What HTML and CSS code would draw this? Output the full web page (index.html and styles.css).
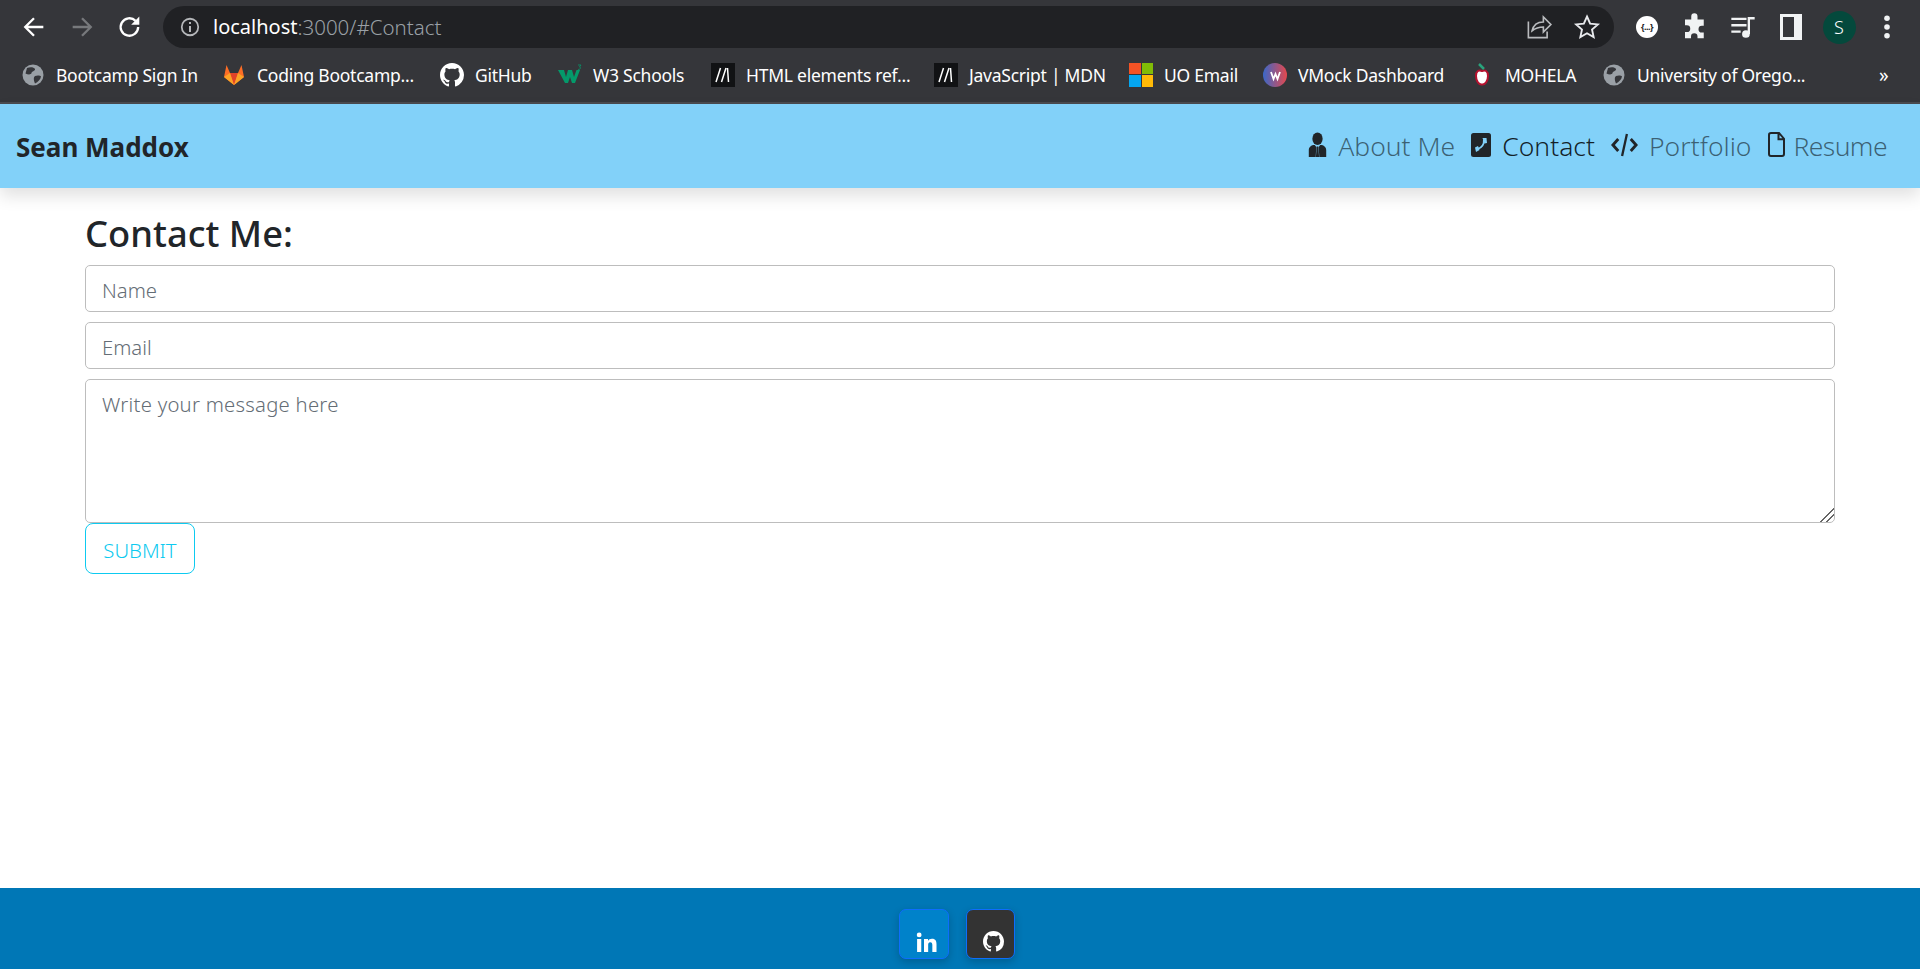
FILE: index.html
```html
<!DOCTYPE html>
<html lang="en">
<head>
<meta charset="utf-8">
<title>Sean Maddox</title>
<link rel="stylesheet" href="styles.css">
</head>
<body>
<div class="browser">
  <div class="toolbar">
    <svg class="tb-icon" viewBox="0 0 24 24"><path d="M20 12H5M12 4.500 4.500 12l7.500 7.500" fill="none" stroke="#fff" stroke-width="2"/></svg>
    <svg class="tb-icon" viewBox="0 0 24 24"><path d="M4 12h15M12 4.500 19.500 12 12 19.500" fill="none" stroke="#77797c" stroke-width="2"/></svg>
    <svg class="tb-icon" viewBox="0 0 24 24"><path d="M19 12a7.500 7.500 0 1 1-2.200-5.300" fill="none" stroke="#fff" stroke-width="2"/><path d="M20 3v7h-7z" fill="#fff"/></svg>
    <div class="omnibox">
      <svg class="info" viewBox="0 0 20 20"><circle cx="10" cy="10" r="7.500" fill="none" stroke="#b5b7ba" stroke-width="1.600"/><path d="M10 9v5.500M10 5.500v1.800" stroke="#b5b7ba" stroke-width="1.800"/></svg>
      <span class="host">localhost</span><span class="path">:3000/#Contact</span>
      <svg class="share" viewBox="0 0 24 24"><path d="M3.500 7.500v13h15v-5M6.500 15c1-4.500 4.500-7 9-7V4l6 6-6 6v-4c-3.500 0-6.500 1-9 3z" fill="none" stroke="#b9bbbe" stroke-width="1.300"/></svg>
      <svg class="star" viewBox="0 0 24 24"><path d="m12 3 2.700 6.100 6.600.7-5 4.400 1.400 6.500-5.700-3.300-5.700 3.300 1.400-6.500-5-4.400 6.600-.7z" fill="none" stroke="#e8eaed" stroke-width="1.600"/></svg>
    </div>
    <div class="ext">
      <span class="ext-json">{...}</span>
      <svg class="ext-puzzle" viewBox="0 0 24 24"><path d="M9 3.500a2.500 2.500 0 0 1 5 0V6h5v5h-1.500a2.700 2.700 0 0 0 0 5.400H19V21h-5v-1.500a2.600 2.600 0 0 0-5.200 0V21H4v-5h1.500a2.700 2.700 0 0 0 0-5.400H4V6h5z" fill="#f1f3f4"/></svg>
      <svg class="ext-queue" viewBox="0 0 24 24"><path d="M2 5h13M2 10.500h13M2 16h8M17 18V4.500h5" fill="none" stroke="#f1f3f4" stroke-width="2"/><circle cx="14.500" cy="18" r="3.300" fill="#f1f3f4"/></svg>
      <svg class="ext-panel" viewBox="0 0 22 26" preserveAspectRatio="none"><path d="M0 0h22v26H0z" fill="#f1f3f4"/><path d="M3 3h11v20H3z" fill="#35363a"/></svg>
      <span class="avatar">S</span>
      <svg class="ext-dots" viewBox="0 0 24 24"><circle cx="12" cy="4.500" r="2.400" fill="#f1f3f4"/><circle cx="12" cy="12" r="2.400" fill="#f1f3f4"/><circle cx="12" cy="19.500" r="2.400" fill="#f1f3f4"/></svg>
    </div>
  </div>
  <div class="bookmarks">
    <a class="bm w1"><svg class="fav" viewBox="0 0 24 24"><circle cx="12" cy="12" r="10.500" fill="#9aa0a6"/><path d="M6 5c3-1.500 7-1 8 1 .5 2-3 2-3.500 4-.5 2-4 1.500-6 .5zM14 13c2.500-1 5.500-.5 6 .5-.5 3-3 5.500-6 7-1-2.500-2-6 0-7.500z" fill="#35363a"/></svg>Bootcamp Sign In</a>
    <a class="bm w2"><svg class="fav" viewBox="0 0 24 24"><path d="M12 22 2 14l2.500-12L8 10h8l3.500-8L22 14z" fill="#fc6d26"/><path d="M12 22 8 10h8z" fill="#e24329"/><path d="M12 22 2 14l6-4zM12 22l10-8-6-4z" fill="#fca326"/></svg>Coding Bootcamp...</a>
    <a class="bm w3"><svg class="fav" viewBox="0 0 16 16"><path fill="#fff" fill-rule="evenodd" d="M8 0C3.580 0 0 3.580 0 8c0 3.540 2.290 6.530 5.470 7.590.4.070.55-.17.55-.38 0-.19-.01-.82-.01-1.490-2.010.37-2.530-.49-2.690-.94-.09-.23-.48-.94-.82-1.130-.28-.15-.68-.52-.01-.53.630-.01 1.080.58 1.230.82.720 1.210 1.870.87 2.330.66.070-.52.280-.87.510-1.070-1.780-.2-3.640-.89-3.640-3.950 0-.87.310-1.590.820-2.150-.08-.2-.36-1.020.08-2.120 0 0 .67-.21 2.200.82.640-.18 1.320-.27 2-.27s1.360.09 2 .27c1.530-1.040 2.200-.82 2.200-.82.440 1.100.16 1.920.08 2.120.51.560.82 1.270.82 2.150 0 3.070-1.870 3.750-3.650 3.950.29.250.54.730.54 1.480 0 1.070-.01 1.930-.01 2.200 0 .21.150.46.550.38A8.010 8.010 0 0 0 16 8c0-4.420-3.580-8-8-8z"/></svg>GitHub</a>
    <a class="bm w4"><svg class="fav" viewBox="0 0 24 24"><path d="M0 7h6l2 7 2-7h4l2 7 2.500-7H22l-5 13h-3l-2-6-2 6H7z" fill="#04996a"/><path d="M20 2h3l-1.500 2c1.500 0 1.500 2.500-1.500 2.500" fill="none" stroke="#04996a" stroke-width=".8"/></svg>W3 Schools</a>
    <a class="bm w5"><svg class="fav" viewBox="0 0 24 24"><path d="M0 0h24v24H0z" fill="#111214"/><path d="M5 19 9.500 5M10.500 19 15 5M16.500 5l1 14" fill="none" stroke="#fff" stroke-width="1.500"/></svg>HTML elements ref...</a>
    <a class="bm w6"><svg class="fav" viewBox="0 0 24 24"><path d="M0 0h24v24H0z" fill="#111214"/><path d="M5 19 9.500 5M10.500 19 15 5M16.500 5l1 14" fill="none" stroke="#fff" stroke-width="1.500"/></svg>JavaScript | MDN</a>
    <a class="bm w7"><span class="ms"><i class="ms-r"></i><i class="ms-g"></i><i class="ms-b"></i><i class="ms-y"></i></span>UO Email</a>
    <a class="bm w8"><svg class="fav" viewBox="0 0 24 24"><defs><linearGradient id="vm" x1="0" y1="0" x2="1" y2="0"><stop offset="0" stop-color="#3a68c8"/><stop offset="1" stop-color="#e5484d"/></linearGradient></defs><circle cx="12" cy="12" r="12" fill="url(#vm)"/><path d="m8 9 2.500 7 2-5 2 5 2.500-7" fill="none" stroke="#fff" stroke-width="1.800"/></svg>VMock Dashboard</a>
    <a class="bm w9"><svg class="fav" viewBox="0 0 24 24"><path d="M12 8c-3-1.500-6 0-6 5 0 5 3 9 6 8.500 3 .5 6-3.500 6-8.500 0-5-3-6.500-6-5z" fill="#fff" stroke="#b5122f" stroke-width="2"/><path d="M9 1l5 5" stroke="#2aa37c" stroke-width="2.500"/></svg>MOHELA</a>
    <a class="bm w10"><svg class="fav" viewBox="0 0 24 24"><circle cx="12" cy="12" r="10.500" fill="#9aa0a6"/><path d="M6 5c3-1.500 7-1 8 1 .5 2-3 2-3.500 4-.5 2-4 1.500-6 .5zM14 13c2.500-1 5.500-.5 6 .5-.5 3-3 5.500-6 7-1-2.500-2-6 0-7.500z" fill="#35363a"/></svg>University of Orego...</a>
    <span class="more">»</span>
  </div>
</div>
<nav class="navbar">
  <a class="brand">Sean Maddox</a>
  <ul class="nav">
    <li class="nav-item"><svg class="nav-ico person" viewBox="0 0 24 26" preserveAspectRatio="none"><circle cx="12" cy="7" r="6.500" fill="#212529"/><path d="M1 26v-7c0-3.500 3-5.500 7.500-5.500l2 2-.8 10.500zM23 26v-7c0-3.500-3-5.500-7.500-5.500l-2 2 .8 10.500zM11 15h2l1 11h-4z" fill="#212529"/></svg>About Me</li>
    <li class="nav-item active"><svg class="nav-ico phone" viewBox="0 0 20 24" preserveAspectRatio="none"><rect width="20" height="24" rx="2.500" fill="#212529"/><path d="M13 6.500c.3 4.500-2.200 8.500-6.500 9.500" fill="none" stroke="#82d1f9" stroke-width="2"/><path d="M11.500 5h4l.5 5-2.500.5zM4 14.500l3-1.500 1.500 4L5 19z" fill="#82d1f9"/></svg>Contact</li>
    <li class="nav-item"><svg class="nav-ico code" viewBox="0 0 28 24" preserveAspectRatio="none"><path d="M7.500 6 2 12l5.500 6M20.500 6 26 12l-5.500 6" fill="none" stroke="#212529" stroke-width="3"/><path d="M16.500 1 11.500 23" stroke="#212529" stroke-width="2.400"/></svg>Portfolio</li>
    <li class="nav-item resume"><svg class="nav-ico doc" viewBox="0 0 17 26" preserveAspectRatio="none"><path d="M1 3A2 2 0 0 1 3 1h8l5 6v16a2 2 0 0 1-2 2H3a2 2 0 0 1-2-2zM10.500 1v6.500H16" fill="none" stroke="#212529" stroke-width="2"/></svg>Resume</li>
  </ul>
</nav>
<main class="content">
  <h1 class="title">Contact Me:</h1>
  <form class="form">
    <input class="field" type="text" placeholder="Name">
    <input class="field" type="email" placeholder="Email">
    <textarea class="field area" placeholder="Write your message here"></textarea>
    <button class="submit" type="button">SUBMIT</button>
  </form>
</main>
<footer class="footer">
  <a class="social linkedin"><svg class="li-ico" viewBox="0 0 24 24"><circle cx="3.200" cy="3.500" r="2.900" fill="#fff"/><path d="M.7 8.500h5V24h-5zM9 8.500h4.800v2.200c.8-1.500 2.500-2.600 4.800-2.600 4.400 0 5.400 2.900 5.400 6.700V24h-5v-8c0-2-.3-3.700-2.500-3.700-2.300 0-2.500 1.800-2.500 3.700v8H9z" fill="#fff"/></svg></a>
  <a class="social github"><svg class="gh-ico" viewBox="0 0 16 16"><path fill="#fff" fill-rule="evenodd" d="M8 0C3.580 0 0 3.580 0 8c0 3.540 2.290 6.530 5.470 7.590.4.070.55-.17.55-.38 0-.19-.01-.82-.01-1.490-2.010.37-2.530-.49-2.690-.94-.09-.23-.48-.94-.82-1.130-.28-.15-.68-.52-.01-.53.630-.01 1.080.58 1.230.82.720 1.210 1.870.87 2.330.66.070-.52.280-.87.510-1.070-1.780-.2-3.640-.89-3.640-3.950 0-.87.310-1.590.820-2.150-.08-.2-.36-1.020.08-2.120 0 0 .67-.21 2.200.82.640-.18 1.320-.27 2-.27s1.360.09 2 .27c1.530-1.040 2.200-.82 2.200-.82.440 1.100.16 1.920.08 2.120.51.560.82 1.270.82 2.150 0 3.070-1.870 3.750-3.650 3.950.29.250.54.730.54 1.480 0 1.070-.01 1.930-.01 2.200 0 .21.150.46.550.38A8.010 8.010 0 0 0 16 8c0-4.420-3.580-8-8-8z"/></svg></a>
</footer>
</body>
</html>
```
FILE: styles.css
```css
* { box-sizing: border-box; }
html, body { height: 100%; }
body {
  margin: 0;
  height: 969px;
  overflow: hidden;
  display: flex;
  flex-direction: column;
  background: #fff;
  color: #212529;
  font-family: "Noto Sans", "Open Sans", sans-serif;
}
.browser { height: 104px; flex: none; background: #35363a; border-bottom: 2px solid #4a4b50; }
.toolbar { height: 54px; display: flex; align-items: center; padding-left: 20px; }
.tb-icon { width: 28px; height: 28px; margin-right: 20px; flex: none; }
.omnibox {
  width: 1451px; height: 42px; margin: -1px 0 0 -1px; flex: none;
  background: #202124; border-radius: 21px;
  display: flex; align-items: center; padding: 0 13px 0 16px;
  font-size: 20.500px; font-weight: 300;
}
.info { width: 22px; height: 22px; margin-right: 12px; }
.host { color: #fff; font-size: 20px; font-weight: 400; }
.path { color: #9aa0a6; }
.share { width: 30px; height: 30px; margin-left: auto; margin-right: 19px; }
.star { width: 28px; height: 28px; }
.ext { display: grid; grid-template-columns: repeat(6, 48px); place-items: center; margin-left: 9px; }
.ext-json {
  width: 22px; height: 22px; border-radius: 50%; background: #fff; color: #202124;
  font-size: 9px; font-weight: 700; text-align: center; line-height: 21px; letter-spacing: -.5px;
}
.ext-puzzle { width: 30px; height: 30px; }
.ext-queue { width: 28px; height: 28px; }
.ext-panel { width: 22px; height: 26px; }
.ext-dots { width: 28px; height: 28px; }
.avatar {
  width: 33px; height: 33px; border-radius: 50%; background: #04493c; color: #fff;
  font-size: 18px; font-weight: 300; text-align: center; line-height: 32px;
}
.bookmarks {
  height: 48px; padding-bottom: 7px; display: flex; align-items: center;
  color: #fff; font-size: 17.500px; letter-spacing: -.25px; white-space: nowrap;
}
.bm { display: flex; align-items: center; flex: none; }
.fav { width: 24px; height: 24px; margin-right: 11px; flex: none; }
.w1 { margin-left: 21px; width: 201px; }
.w2 { width: 218px; }
.w3 { width: 118px; }
.w4 { width: 153px; }
.w5 { width: 223px; }
.w6 { width: 195px; }
.w7 { width: 134px; }
.w8 { width: 207px; }
.w9 { width: 132px; }
.w10 { width: 272px; }
.ms { width: 24px; height: 24px; margin-right: 11px; display: grid; grid-template-columns: 1fr 1fr; gap: 1px; flex: none; }
.ms-r { background: #f35325; }
.ms-g { background: #81bc06; }
.ms-b { background: #05a6f0; }
.ms-y { background: #ffba08; }
.more { font-size: 19px; margin-left: 5px; }
.navbar {
  position: relative; z-index: 1;
  height: 84px; flex: none;
  background: #82d1f9;
  display: flex; align-items: center; justify-content: space-between;
  padding: 0 33px 0 16px;
  box-shadow: 0 8px 16px rgba(0,0,0,.12);
}
.brand { font-size: 26px; font-weight: 700; color: #212529; padding-top: 2px; }
.nav { list-style: none; margin: 0; padding: 0; display: flex; gap: 16px; }
.nav-item { display: flex; align-items: center; font-size: 26.500px; color: rgba(0,0,0,.55); font-weight: 300; }
.nav-item.active { color: rgba(0,0,0,.85); }
.nav-item.resume { letter-spacing: -.6px; }
.nav-ico { height: 25px; margin-right: 11px; margin-top: -3px; flex: none; }
.nav-ico.person { width: 19px; }
.nav-ico.phone { width: 20px; height: 24px; }
.nav-ico.code { width: 27px; height: 24px; }
.nav-ico.doc { width: 17px; margin-right: 9px; }
.content { flex: 1; padding: 0 85px; }
.title { margin: 22px 0 0; height: 55px; font-size: 36.300px; line-height: 47px; font-weight: 500; color: #212529; }
.form { display: flex; flex-direction: column; align-items: flex-start; }
.field {
  display: block; width: 100%; height: 47px; margin: 0 0 10px;
  padding: 2px 16px 0; border: 1px solid #bdbdbd; border-radius: 5px;
  font: inherit; font-size: 20.300px; font-weight: 350; color: #212529; background: #fff; outline: none;
}
.field::placeholder { color: #646d75; opacity: 1; }
.area { height: 144px; margin: 0; padding: 9px 16px; line-height: 30px; letter-spacing: .25px; resize: vertical; }
.area::-webkit-resizer {
  background: linear-gradient(135deg, transparent 52%, #666 52%, #666 60%, transparent 60%, transparent 72%, #666 72%, #666 80%, transparent 80%);
}
.submit {
  width: 110px; height: 51px; padding: 2px 0 0;
  background: #fff; border: 1px solid #0dcaf0; border-radius: 8px;
  color: #0dcaf0; font: inherit; font-size: 20.300px; font-weight: 350;
}
.footer {
  height: 81px; flex: none; background: #0077b6;
  display: flex; justify-content: center; gap: 17px; padding: 21px 6px 0 0;
}
.social {
  width: 50px; height: 50px; border-radius: 7px; display: flex; justify-content: center; align-items: flex-end;
  padding-bottom: 6px; border: 1px solid #0d6efd; box-shadow: 0 3px 8px rgba(0,0,0,.2);
}
.linkedin { background: #0082ca; padding-left: 4px; }
.github { background: #333; width: 49px; padding-left: 6px; }
.li-ico { width: 21px; height: 20px; }
.gh-ico { width: 23px; height: 21px; }
```
